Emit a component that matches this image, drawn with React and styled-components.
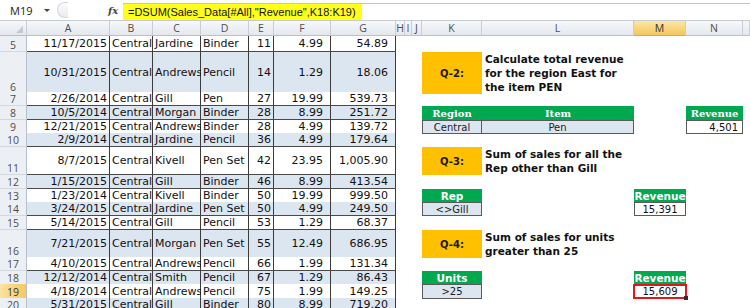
import React from 'react';
import styled, { createGlobalStyle, css } from 'styled-components';

const GlobalStyle = createGlobalStyle`
  body {
    margin: 0;
    background: #ffffff;
    overflow: hidden;
  }
`;

const COLS = '27px 83px 43px 48px 48px 25px 57px 65px 9px 7px 10px 60px 152px 52px 57px 1fr';

const Sheet = styled.div`
  width: 750px;
  height: 308px;
  overflow: hidden;
  background: #ffffff;
  font-family: 'DejaVu Sans', Verdana, sans-serif;
`;

const FormulaBar = styled.div`
  display: flex;
  align-items: stretch;
  height: 21px;
  box-sizing: border-box;
  border-bottom: 1px solid #c6cbd2;
  background: #ffffff;
`;

const NameBox = styled.div`
  display: flex;
  align-items: center;
  width: 52px;
  padding-left: 10px;
  box-sizing: border-box;
  font-family: 'Open Sans', 'Liberation Sans', sans-serif;
  font-size: 11px;
  color: #222;
`;

const DropArrow = styled.span`
  margin-left: auto;
  margin-right: 2px;
  width: 0;
  height: 0;
  border-left: 3px solid transparent;
  border-right: 3px solid transparent;
  border-top: 3px solid #444;
`;

const Splitter = styled.div`
  display: flex;
  align-items: center;
  width: 56px;
  padding-left: 5px;
  box-sizing: border-box;
`;

const Knob = styled.span`
  width: 10px;
  height: 14px;
  border: 1px solid #d2d6dc;
  border-right: none;
  border-radius: 8px 0 0 8px;
  background: linear-gradient(#fafbfc, #e9ecf0);
`;

const Fx = styled.div`
  display: flex;
  align-items: center;
  width: 15px;
  font-family: 'DejaVu Serif', 'Liberation Serif', serif;
  font-style: italic;
  font-weight: bold;
  font-size: 10px;
  color: #444;
`;

const FormulaInput = styled.div`
  flex: 1;
  margin-top: 3px;
  border-top: 1px solid #c1c6cd;
  display: flex;
  align-items: stretch;
`;

const Highlight = styled.span`
  display: flex;
  align-items: center;
  background: #ffff1a;
  padding: 0 6px 0 5px;
  font-family: 'Liberation Sans', Arial, sans-serif;
  font-size: 11px;
  color: #111;
  white-space: nowrap;
`;

const Row = styled.div`
  display: grid;
  grid-template-columns: ${COLS};
  height: ${p => p.$h}px;
`;

const ColHead = styled.div`
  display: flex;
  align-items: center;
  justify-content: center;
  box-sizing: border-box;
  border-right: 1px solid #c9ced6;
  border-bottom: 1px solid #b7c0cc;
  font-family: 'Open Sans', 'Liberation Sans', sans-serif;
  font-size: 10.5px;
  color: #4d4d4d;
  background: linear-gradient(#f6f8fa, #e4e8ed);
  ${p => p.$active && css`
    background: linear-gradient(#fbe7a2, #f4c65e);
    border-bottom-color: #e2a93a;
    color: #333;
  `}
`;

const Corner = styled(ColHead)`
  justify-content: flex-end;
  align-items: flex-end;
  padding: 0 3px 2px 0;
`;

const RowHead = styled.div`
  display: flex;
  align-items: flex-end;
  justify-content: center;
  box-sizing: border-box;
  border-right: 1px solid #b7c0cc;
  border-bottom: 1px solid #d3d8de;
  font-family: 'Open Sans', 'Liberation Sans', sans-serif;
  font-size: 10.5px;
  line-height: 12px;
  color: #4d4d4d;
  background: #eceff3;
  overflow: hidden;
  ${p => p.$active && css`
    background: linear-gradient(90deg, #fbe3a0, #f5c964);
    color: #333;
  `}
`;

const DataCell = styled.div`
  display: flex;
  align-items: center;
  justify-content: ${p => (p.$align === 'right' ? 'flex-end' : 'flex-start')};
  padding: ${p => (p.$align === 'right' ? `0 ${p.$pad ?? 2}px 0 0` : '0 0 0 2px')};
  box-sizing: border-box;
  border-right: 1px solid #3c3c3c;
  border-bottom: 1px solid #4a4a4a;
  background: ${p => (p.$fill ? '#dce6f1' : '#ffffff')};
  font-size: 11px;
  color: #111;
  white-space: nowrap;
  overflow: visible;
`;

const Blank = styled.div`
  grid-column: ${p => p.$col};
`;

const QBox = styled.div`
  grid-column: ${p => p.$col};
  display: flex;
  align-items: center;
  justify-content: center;
  background: #ffc000;
  font-weight: bold;
  font-size: 10px;
  color: #1a1a1a;
`;

const QText = styled.div`
  grid-column: ${p => p.$col};
  display: flex;
  flex-direction: column;
  justify-content: center;
  padding-left: 3px;
  font-weight: bold;
  font-size: 10.5px;
  line-height: 14px;
  color: #111;
  white-space: nowrap;
`;

const GreenHead = styled.div`
  grid-column: ${p => p.$col};
  display: flex;
  align-items: center;
  justify-content: center;
  background: #00a84f;
  font-family: ${p => (p.$serif ? "'DejaVu Serif', 'Liberation Serif', serif" : "'DejaVu Sans', Verdana, sans-serif")};
  font-weight: bold;
  font-size: ${p => (p.$serif ? 10 : 10.5)}px;
  color: #ffffff;
  white-space: nowrap;
  overflow: visible;
`;

const InputCell = styled.div`
  grid-column: ${p => p.$col};
  display: flex;
  align-items: center;
  justify-content: center;
  box-sizing: border-box;
  background: #dce6f1;
  border: 1px solid #5a5a5a;
  margin-left: ${p => (p.$joined ? '-1px' : '0')};
  font-size: 10px;
  color: #222;
`;

const ValueCell = styled.div`
  grid-column: ${p => p.$col};
  position: relative;
  display: flex;
  align-items: center;
  justify-content: ${p => (p.$align === 'right' ? 'flex-end' : 'center')};
  padding-right: ${p => (p.$align === 'right' ? '4px' : '0')};
  box-sizing: border-box;
  background: #ffffff;
  border: 1px solid #5a5a5a;
  font-size: 10px;
  color: #111;
  ${p => p.$selected && css`
    border: 2px solid #e3161d;
    margin: 0 -1px 0 -1px;
  `}
`;

const FillHandle = styled.span`
  position: absolute;
  right: -3px;
  bottom: -3px;
  width: 4px;
  height: 4px;
  background: #3a2a2a;
`;

const data = [
  [5, '11/17/2015', 'Central', 'Jardine', 'Binder', 11, '4.99', '54.89', 16],
  [6, '10/31/2015', 'Central', 'Andrews', 'Pencil', 14, '1.29', '18.06', 40],
  [7, '2/26/2014', 'Central', 'Gill', 'Pen', 27, '19.99', '539.73', 14],
  [8, '10/5/2014', 'Central', 'Morgan', 'Binder', 28, '8.99', '251.72', 14],
  [9, '12/21/2015', 'Central', 'Andrews', 'Binder', 28, '4.99', '139.72', 13],
  [10, '2/9/2014', 'Central', 'Jardine', 'Pencil', 36, '4.99', '179.64', 14],
  [11, '8/7/2015', 'Central', 'Kivell', 'Pen Set', 42, '23.95', '1,005.90', 28],
  [12, '1/15/2015', 'Central', 'Gill', 'Binder', 46, '8.99', '413.54', 14],
  [13, '1/23/2014', 'Central', 'Kivell', 'Binder', 50, '19.99', '999.50', 13],
  [14, '3/24/2015', 'Central', 'Jardine', 'Pen Set', 50, '4.99', '249.50', 14],
  [15, '5/14/2015', 'Central', 'Gill', 'Pencil', 53, '1.29', '68.37', 14],
  [16, '7/21/2015', 'Central', 'Morgan', 'Pen Set', 55, '12.49', '686.95', 27],
  [17, '4/10/2015', 'Central', 'Andrews', 'Pencil', 66, '1.99', '131.34', 14],
  [18, '12/12/2014', 'Central', 'Smith', 'Pencil', 67, '1.29', '86.43', 13],
  [19, '4/18/2014', 'Central', 'Andrews', 'Pencil', 75, '1.99', '149.25', 14],
  [20, '5/31/2015', 'Central', 'Gill', 'Binder', 80, '8.99', '719.20', 14],
];

const question = (label, lines) => [
  <QBox key="q" $col={12}>{label}</QBox>,
  <QText key="t" $col={13}>{lines.map(l => <span key={l}>{l}</span>)}</QText>,
];

const side = {
  6: question('Q-2:', ['Calculate total revenue', 'for the region East for', 'the item PEN']),
  8: [
    <GreenHead key="a" $col={12} $serif>Region</GreenHead>,
    <GreenHead key="b" $col={13} $serif>Item</GreenHead>,
    <GreenHead key="c" $col={15} $serif>Revenue</GreenHead>,
  ],
  9: [
    <InputCell key="a" $col={12}>Central</InputCell>,
    <InputCell key="b" $col={13} $joined>Pen</InputCell>,
    <ValueCell key="c" $col={15} $align="right">4,501</ValueCell>,
  ],
  11: question('Q-3:', ['Sum of sales for all the', 'Rep other than Gill']),
  13: [
    <GreenHead key="a" $col={12}>Rep</GreenHead>,
    <GreenHead key="b" $col={14}>Revenue</GreenHead>,
  ],
  14: [
    <InputCell key="a" $col={12}>&lt;&gt;Gill</InputCell>,
    <ValueCell key="b" $col={14}>15,391</ValueCell>,
  ],
  16: question('Q-4:', ['Sum of sales for units', 'greater than 25']),
  18: [
    <GreenHead key="a" $col={12}>Units</GreenHead>,
    <GreenHead key="b" $col={14}>Revenue</GreenHead>,
  ],
  19: [
    <InputCell key="a" $col={12}>&gt;25</InputCell>,
    <ValueCell key="b" $col={14} $selected>
      15,609
      <FillHandle />
    </ValueCell>,
  ],
};

const letters = ['A', 'B', 'C', 'D', 'E', 'F', 'G', 'H', 'I', 'J', 'K', 'L', 'M', 'N', ''];

export default function App() {
  return (
    <Sheet>
      <GlobalStyle />
      <FormulaBar>
        <NameBox>
          M19
          <DropArrow />
        </NameBox>
        <Splitter>
          <Knob />
        </Splitter>
        <Fx>fx</Fx>
        <FormulaInput>
          <Highlight>=DSUM(Sales_Data[#All],"Revenue",K18:K19)</Highlight>
        </FormulaInput>
      </FormulaBar>

      <Row $h={15}>
        <Corner>
          <svg width="7" height="7" viewBox="0 0 7 7">
            <path d="M7 0 L7 7 L0 7 Z" fill="#c3c9d1" />
          </svg>
        </Corner>
        {letters.map((l, i) => (
          <ColHead key={i} $active={l === 'M'}>{l}</ColHead>
        ))}
      </Row>

      {data.map(([n, date, region, rep, item, units, cost, total, h]) => (
        <Row key={n} $h={h}>
          <RowHead $active={n === 19}>{n}</RowHead>
          <DataCell $fill={n % 2 === 0} $align="right">{date}</DataCell>
          <DataCell $fill={n % 2 === 0}>{region}</DataCell>
          <DataCell $fill={n % 2 === 0}>{rep}</DataCell>
          <DataCell $fill={n % 2 === 0}>{item}</DataCell>
          <DataCell $fill={n % 2 === 0} $align="right">{units}</DataCell>
          <DataCell $fill={n % 2 === 0} $align="right" $pad={7}>{cost}</DataCell>
          <DataCell $fill={n % 2 === 0} $align="right" $pad={7}>{total}</DataCell>
          {side[n] || <Blank $col={12} />}
        </Row>
      ))}
    </Sheet>
  );
}
